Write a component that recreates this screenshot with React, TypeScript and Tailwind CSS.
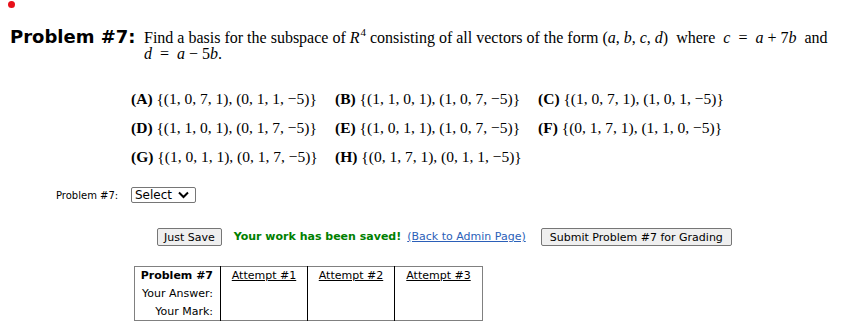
import React from 'react'

const serif = "font-['Liberation_Serif','Times_New_Roman',serif]"
const sans = "font-['DejaVu_Sans','Verdana',sans-serif]"

const options: [string, string][] = [
  ['A', '{(1, 0, 7, 1), (0, 1, 1, −5)}'],
  ['B', '{(1, 1, 0, 1), (1, 0, 7, −5)}'],
  ['C', '{(1, 0, 7, 1), (1, 0, 1, −5)}'],
  ['D', '{(1, 1, 0, 1), (0, 1, 7, −5)}'],
  ['E', '{(1, 0, 1, 1), (1, 0, 7, −5)}'],
  ['F', '{(0, 1, 7, 1), (1, 1, 0, −5)}'],
  ['G', '{(1, 0, 1, 1), (0, 1, 7, −5)}'],
  ['H', '{(0, 1, 7, 1), (0, 1, 1, −5)}'],
]

function I({ children }: { children: React.ReactNode }) {
  return <span className="italic">{children}</span>
}

export default function App() {
  return (
    <div className={`w-[841px] h-[335px] bg-white text-black overflow-hidden ${sans}`}>
      {/* red marker */}
      <div className="pl-[8px] pt-[1px]">
        <div className="w-[7px] h-[7px] rounded-full bg-[#e8101a]" />
      </div>

      {/* Question */}
      <div className="flex items-baseline pl-[10px] mt-[18px]">
        <h2 className="text-[18px] leading-[22px] font-bold w-[134px] shrink-0">Problem #7:</h2>
        <div className={`${serif} text-[16px] leading-[16px]`}>
          <div className="whitespace-nowrap">
            Find a basis for the subspace of <I>R</I>
            <sup className="text-[11px] -top-[7px] ml-[1px]">4</sup>&nbsp;consisting of all vectors of the form (<I>a</I>,&nbsp;<I>b</I>,&nbsp;<I>c</I>,&nbsp;<I>d</I>)&nbsp; where&nbsp; <I>c</I>&nbsp; =&nbsp; <I>a</I> + 7<I>b</I>&nbsp; and
          </div>
          <div>
            <I>d</I>&nbsp; =&nbsp; <I>a</I> − 5<I>b</I>.
          </div>
        </div>
      </div>

      {/* Options */}
      <div className={`${serif} text-[15.5px] leading-[29px] grid grid-cols-[204px_203px_auto] ml-[131px] mt-[22px]`}>
        {options.map(([k, v]) => (
          <div key={k} className="whitespace-nowrap">
            <b>({k})</b> {v}
          </div>
        ))}
      </div>

      {/* Answer select */}
      <div className="flex items-center mt-[16px] pl-[56px]">
        <span className="text-[10px] w-[75px]">Problem #7:</span>
        <div className="flex items-center gap-[6px] border border-[#767676] rounded-[2px] h-[16px] pl-[3px] pr-[6px] text-[12px] leading-none">
          Select
          <svg width="11" height="8" viewBox="0 0 11 8">
            <path d="M1 1.5 L5.5 6 L10 1.5" fill="none" stroke="black" strokeWidth="2" />
          </svg>
        </div>
      </div>

      {/* Actions */}
      <div className="flex items-center mt-[25px] pl-[157px] text-[11px]">
        <button className="h-[18px] px-[6px] border border-[#767676] bg-[#efefef] rounded-[2px] leading-none">Just Save</button>
        <span className="ml-[12px] font-bold text-[#008000]">Your work has been saved!</span>
        <a className="ml-[6px] text-[#2b5fb8] underline">(Back to Admin Page)</a>
        <button className="ml-[15px] h-[18px] px-[8px] border border-[#767676] bg-[#efefef] rounded-[2px] leading-none">
          Submit Problem #7 for Grading
        </button>
      </div>

      {/* Attempts table */}
      <table className="ml-[134px] mt-[20px] border border-[#808080] border-collapse text-[11px] leading-[17px]">
        <tbody>
          <tr>
            <td className="w-[86px] text-right pr-[7px] align-top">
              <div className="font-bold leading-[18px]">Problem #7</div>
              <div className="leading-[18px]">Your Answer:</div>
              <div>Your Mark:</div>
            </td>
            <td className="w-[87px] border-l border-black text-center align-top"><span className="underline">Attempt #1</span></td>
            <td className="w-[87px] border-l border-black text-center align-top"><span className="underline">Attempt #2</span></td>
            <td className="w-[88px] border-l border-black text-center align-top"><span className="underline">Attempt #3</span></td>
          </tr>
        </tbody>
      </table>
    </div>
  )
}
